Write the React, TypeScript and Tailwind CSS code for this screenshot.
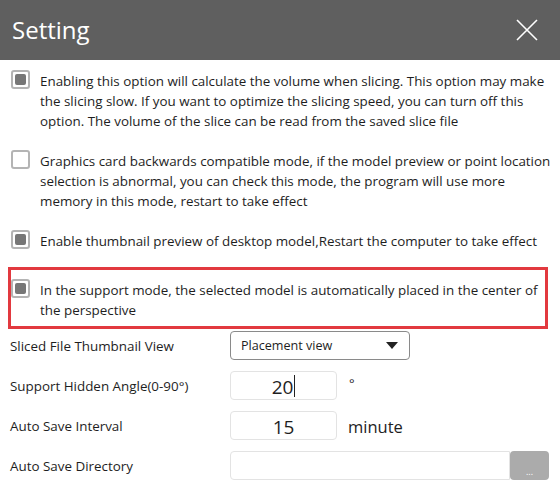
type Opt = { checked: boolean; lines: string[] };

const options: Opt[] = [
  {
    checked: true,
    lines: [
      "Enabling this option will calculate the volume when slicing. This option may make",
      "the slicing slow. If you want to optimize the slicing speed, you can turn off this",
      "option. The volume of the slice can be read from the saved slice file",
    ],
  },
  {
    checked: false,
    lines: [
      "Graphics card backwards compatible mode, if the model preview or point location",
      "selection is abnormal, you can check this mode, the program will use more",
      "memory in this mode, restart to take effect",
    ],
  },
  {
    checked: true,
    lines: ["Enable thumbnail preview of desktop model,Restart the computer to take effect"],
  },
];

function Check({ checked }: { checked: boolean }) {
  return (
    <div className="w-[19px] h-[19px] -mt-[1px] shrink-0 rounded-[3px] border-2 border-[#b4b4b4] bg-white flex items-center justify-center">
      {checked && <div className="w-[11px] h-[11px] rounded-[2px] bg-[#777]" />}
    </div>
  );
}

function OptionRow({ opt }: { opt: Opt }) {
  return (
    <div className="flex gap-[10px] items-start">
      <Check checked={opt.checked} />
      <p className="text-[13.4px] leading-[20px] text-[#1e1e1e] whitespace-nowrap">
        {opt.lines.map((l, i) => (
          <span key={i} className="block">
            {l}
          </span>
        ))}
      </p>
    </div>
  );
}

export default function App() {
  return (
    <div className="w-[560px] h-[490px] bg-white overflow-hidden font-['Open_Sans',sans-serif]">
      {/* Title bar */}
      <div className="h-[60px] bg-[#5f5f5f] flex items-center justify-between pl-[12px] pr-[22px]">
        <span className="text-white text-[24px]">Setting</span>
        <svg width="22" height="22" viewBox="0 0 22 22" className="text-white">
          <path d="M1 1 L21 21 M21 1 L1 21" stroke="currentColor" strokeWidth="1.6" fill="none" />
        </svg>
      </div>

      {/* Options */}
      <div className="pl-[11px] pt-[11px] flex flex-col gap-[20px]">
        {options.map((o, i) => (
          <OptionRow key={i} opt={o} />
        ))}
      </div>

      {/* Highlighted option */}
      <div className="ml-[8px] mr-[12px] mt-[16px] h-[62px] border-[3px] border-[#e2393f] pt-[10px]">
        <OptionRow
          opt={{
            checked: true,
            lines: [
              "In the support mode, the selected model is automatically placed in the center of",
              "the perspective",
            ],
          }}
        />
      </div>

      {/* Fields */}
      <div className="pl-[10px] mt-[2px] flex flex-col gap-[11px] text-[13.4px] text-[#1e1e1e]">
        <div className="flex items-center h-[29px]">
          <span className="w-[220px] pt-[1px]">Sliced File Thumbnail View</span>
          <div className="w-[180px] h-[29px] border border-[#8a8a8a] rounded-[4px] flex items-center justify-between pl-[10px] pr-[11px]">
            <span className="text-[12.6px] pt-[1px]">Placement view</span>
            <svg width="12" height="8" viewBox="0 0 12 8">
              <path d="M0 0 L12 0 L6 7 Z" fill="#222" />
            </svg>
          </div>
        </div>
        <div className="flex items-center h-[29px]">
          <span className="w-[220px] pt-[1px]">Support Hidden Angle(0-90°)</span>
          <div className="w-[107px] h-[29px] border border-[#e3e3e3] rounded-[4px] flex items-center justify-center text-[19px] pt-[3px]">
            <span>20</span>
            <span className="w-px h-[22px] bg-[#222] ml-[1px] -mt-[2px]" />
          </div>
          <span className="ml-[12px] text-[13px] -mt-[3px]">°</span>
        </div>
        <div className="flex items-center h-[29px]">
          <span className="w-[220px] pt-[1px]">Auto Save Interval</span>
          <div className="w-[107px] h-[29px] border border-[#e3e3e3] rounded-[4px] flex items-center justify-center text-[19px] pt-[3px]">
            15
          </div>
          <span className="ml-[11px] text-[16.5px] pt-[3px]">minute</span>
        </div>
        <div className="flex items-center h-[29px]">
          <span className="w-[220px] pt-[1px]">Auto Save Directory</span>
          <div className="w-[280px] h-[29px] border border-[#e3e3e3] rounded-l-[4px]" />
          <div className="w-[39px] h-[29px] bg-[#ababab] rounded-[4px] flex items-end justify-center pb-[4px] text-white text-[9px] leading-none">
            ...
          </div>
        </div>
      </div>
    </div>
  );
}
